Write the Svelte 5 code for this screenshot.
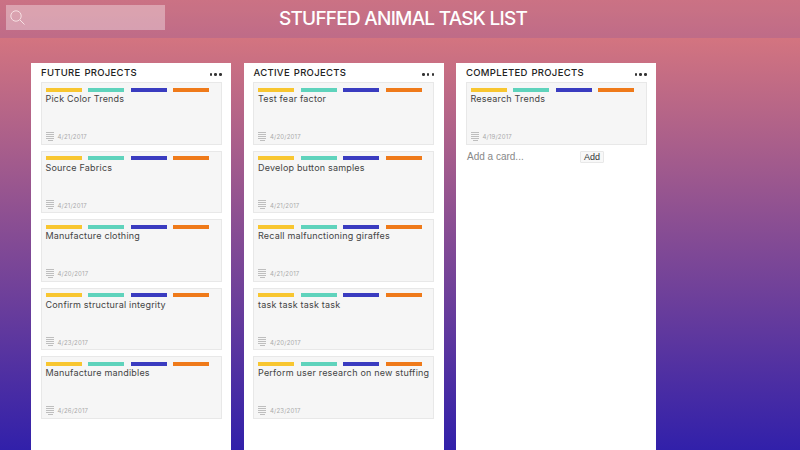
<script>
  const labels = ['yellow', 'teal', 'blue', 'orange'];
  const columns = [
    { title: 'FUTURE PROJECTS', cards: [
      ['Pick Color Trends', '4/21/2017'], ['Source Fabrics', '4/21/2017'], ['Manufacture clothing', '4/20/2017'],
      ['Confirm structural integrity', '4/23/2017'], ['Manufacture mandibles', '4/26/2017'] ] },
    { title: 'ACTIVE PROJECTS', cards: [
      ['Test fear factor', '4/20/2017'], ['Develop button samples', '4/21/2017'], ['Recall malfunctioning giraffes', '4/21/2017'],
      ['task task task task', '4/20/2017'], ['Perform user research on new stuffing', '4/23/2017'] ] },
    { title: 'COMPLETED PROJECTS', add: true, cards: [['Research Trends', '4/19/2017']] }
  ];
</script>

<div class="page">
  <header class="top">
    <div class="search">
      <svg width="15" height="15" viewBox="0 0 15 15" fill="none" stroke="#f6dfe2" stroke-width="1">
        <circle cx="6" cy="6" r="5.2" />
        <path d="M9.8 9.8 14.5 14.5" />
      </svg>
    </div>
    <h1>STUFFED ANIMAL TASK LIST</h1>
  </header>
  <main class="board">
    {#each columns as col}
      <section class="col">
        <div class="col-head">
          <h2>{col.title}</h2>
          <span class="dots"><i></i><i></i><i></i></span>
        </div>
        {#each col.cards as card}
          <article class="card">
            <div class="labels">
              {#each labels as l}<span class={l}></span>{/each}
            </div>
            <p class="name">{card[0]}</p>
            <div class="meta">
              <svg width="8" height="10" viewBox="0 0 8 10" stroke="#b0b0b0" stroke-width="0.8">
                <path d="M0 .5h8M0 2.5h8M0 4.5h8M0 6.5h8M2 8.5h5" />
              </svg>
              <span>{card[1]}</span>
            </div>
          </article>
        {/each}
        {#if col.add}
          <div class="add">
            <span class="ph">Add a card...</span>
            <button>Add</button>
          </div>
        {/if}
      </section>
    {/each}
  </main>
</div>

<style>
  :global(body) { margin: 0; }
  .page {
    width: 800px; height: 450px; overflow: hidden;
    background: linear-gradient(180deg, #e27c7c 0%, #3120aa 100%);
    font-family: "Inter", "Liberation Sans", sans-serif;
  }
  .top {
    position: relative; height: 37.5px;
    background: rgba(100, 70, 170, 0.18);
    display: flex; align-items: center; justify-content: center;
  }
  .search {
    position: absolute; left: 6px; top: 5px; width: 159px; height: 25px;
    background: rgba(255,255,255,0.35);
    display: flex; align-items: center; padding-left: 4px; box-sizing: border-box;
  }
  h1 {
    margin: 0 0 0 6px; color: #fff; font-size: 19px; font-weight: 500; letter-spacing: -0.75px;
    font-family: "Inter", sans-serif;
  }
  .board { display: flex; gap: 12.5px; padding: 25px 0 0 31px; box-sizing: border-box; }
  .col { width: 200px; background: #fff; box-sizing: border-box; padding: 0 9px 0 9.5px; height: 400px; }
  .col-head { display: flex; justify-content: space-between; align-items: flex-start; height: 19.5px; }
  h2 {
    margin: 4px 0 0; font-size: 9.5px; font-weight: 500; color: #222; letter-spacing: 0.3px; word-spacing: 1px; line-height: 12px;
    white-space: nowrap; padding-left: 0.5px;
  }
  .dots { display: flex; gap: 2.2px; margin-top: 10.5px; margin-right: 0.5px; }
  .dots i { width: 2.5px; height: 2.5px; border-radius: 50%; background: #333; }
  .card {
    box-sizing: border-box; width: 181px; height: 62.5px; margin-bottom: 6px;
    background: #f6f6f6; border: 1px solid #e8e8e8; padding: 4.5px 4px 0;
    display: flex; flex-direction: column;
  }
  .labels { display: flex; gap: 6.5px; }
  .labels span { width: 36px; height: 4px; }
  .yellow { background: #f8c630; }
  .teal { background: #5fd3bc; }
  .blue { background: #3a3cc0; }
  .orange { background: #ef7a1a; }
  .name { margin: 1.5px 0 0; font-size: 9px; color: #444; letter-spacing: 0.2px; line-height: 12px; white-space: nowrap; }
  .meta { margin-top: auto; margin-bottom: 2px; display: flex; align-items: center; gap: 4px; font-size: 6px; color: #aaa; letter-spacing: 0.2px; }
  .add { display: flex; align-items: center; height: 12px; padding-left: 1.5px; }
  .ph { width: 113px; font-size: 10px; color: #888; font-family: "Liberation Sans", sans-serif; }
  button {
    font: 9px "Liberation Sans", sans-serif; color: #333; width: 24px; height: 12px; padding: 0;
    background: #f8f8f8; border: 1px solid #e8e8e8; border-radius: 1px;
  }
</style>
